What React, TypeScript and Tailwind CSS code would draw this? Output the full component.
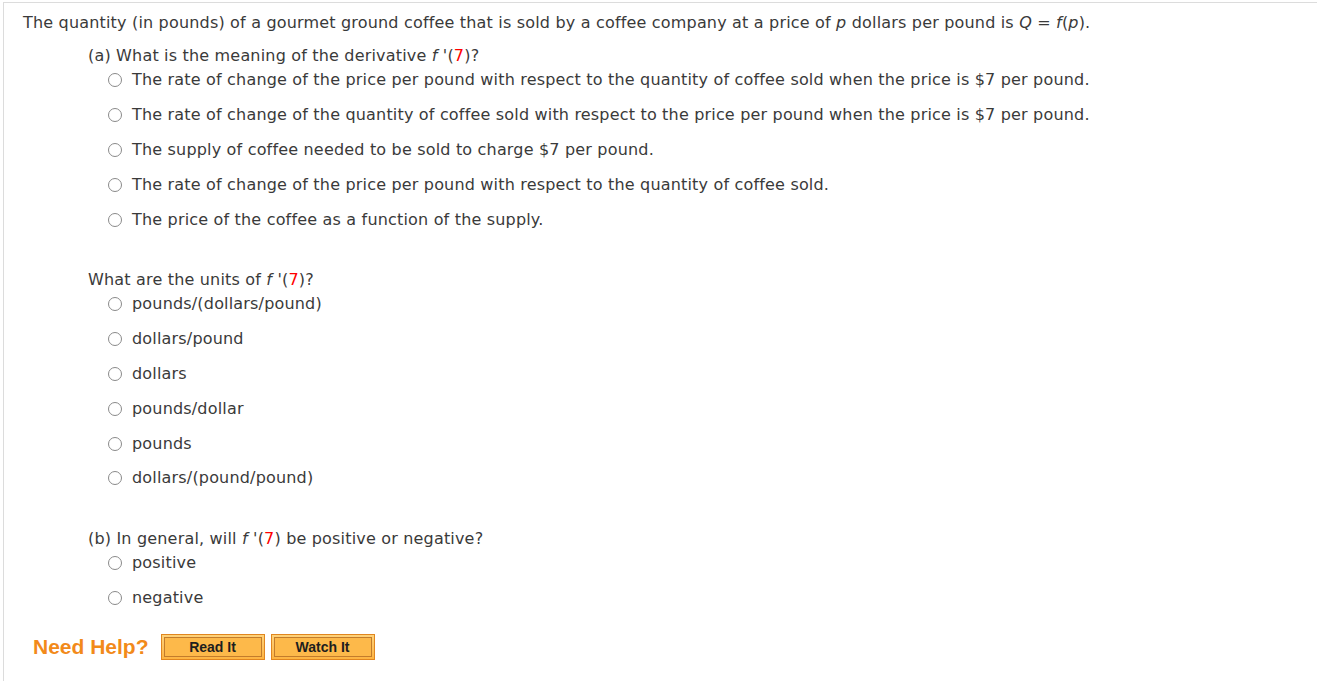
import React from 'react';

const Radio = () => (
  <span className="inline-block w-[14px] h-[14px] rounded-full border-[1.5px] border-[#8a8a8a] bg-white shrink-0" />
);

const Seven = () => <span className="text-[#ff0000]">7</span>;

const Fp = () => (
  <>
    <i>f</i> '(<Seven />)
  </>
);

function Option({ children }: { children: React.ReactNode }) {
  return (
    <div className="flex items-center gap-[10px] h-[34.8px]">
      <Radio />
      <span>{children}</span>
    </div>
  );
}

const meaning = [
  'The rate of change of the price per pound with respect to the quantity of coffee sold when the price is $7 per pound.',
  'The rate of change of the quantity of coffee sold with respect to the price per pound when the price is $7 per pound.',
  'The supply of coffee needed to be sold to charge $7 per pound.',
  'The rate of change of the price per pound with respect to the quantity of coffee sold.',
  'The price of the coffee as a function of the supply.',
];

const units = [
  'pounds/(dollars/pound)',
  'dollars/pound',
  'dollars',
  'pounds/dollar',
  'pounds',
  'dollars/(pound/pound)',
];

function HelpButton({ label }: { label: string }) {
  return (
    <button className="w-[104px] h-[26px] border border-[#e0861f] bg-gradient-to-b from-[#fed27a] to-[#fdb441] p-[2px] tracking-normal">
      <span className="flex h-full items-center justify-center border border-[#c27c2c] bg-[#fdb94a] text-[14px] font-bold text-[#1e1e1e] font-['Liberation_Sans',Arial,sans-serif]">
        {label}
      </span>
    </button>
  );
}

export default function App() {
  return (
    <div className="min-h-[681px] bg-white pt-[2px] pl-[3px] font-['DejaVu_Sans',Verdana,sans-serif] text-[16px] tracking-[0.18px] text-[#3a3a3a]">
      <div className="border-t border-l border-[#dcdcdc] min-h-[679px] pl-[19px] pt-[10px]">
        <p className="leading-[20px]">
          The quantity (in pounds) of a gourmet ground coffee that is sold by a coffee company at a price of{' '}
          <i>p</i> dollars per pound is <i>Q</i> = <i>f</i>(<i>p</i>).
        </p>

        <div className="pl-[65px] pt-[13px]">
          <p className="leading-[20px]">
            (a) What is the meaning of the derivative <Fp />?
          </p>
          <div className="pl-[20px] -mt-[3px]">
            {meaning.map((m, i) => (
              <Option key={i}>{m}</Option>
            ))}
          </div>

          <p className="leading-[20px] mt-[33px]">
            What are the units of <Fp />?
          </p>
          <div className="pl-[20px] -mt-[3px]">
            {units.map((u, i) => (
              <Option key={i}>{u}</Option>
            ))}
          </div>

          <p className="leading-[20px] mt-[33px]">
            (b) In general, will <Fp /> be positive or negative?
          </p>
          <div className="pl-[20px] -mt-[3px]">
            <Option>positive</Option>
            <Option>negative</Option>
          </div>
        </div>

        <div className="flex items-center pl-[10px] mt-[16px]">
          <span className="text-[21px] font-bold tracking-normal text-[#f28a1a] font-['Liberation_Sans',Arial,sans-serif] mr-[12px]">
            Need Help?
          </span>
          <HelpButton label="Read It" />
          <span className="w-[6px]" />
          <HelpButton label="Watch It" />
        </div>
      </div>
    </div>
  );
}
